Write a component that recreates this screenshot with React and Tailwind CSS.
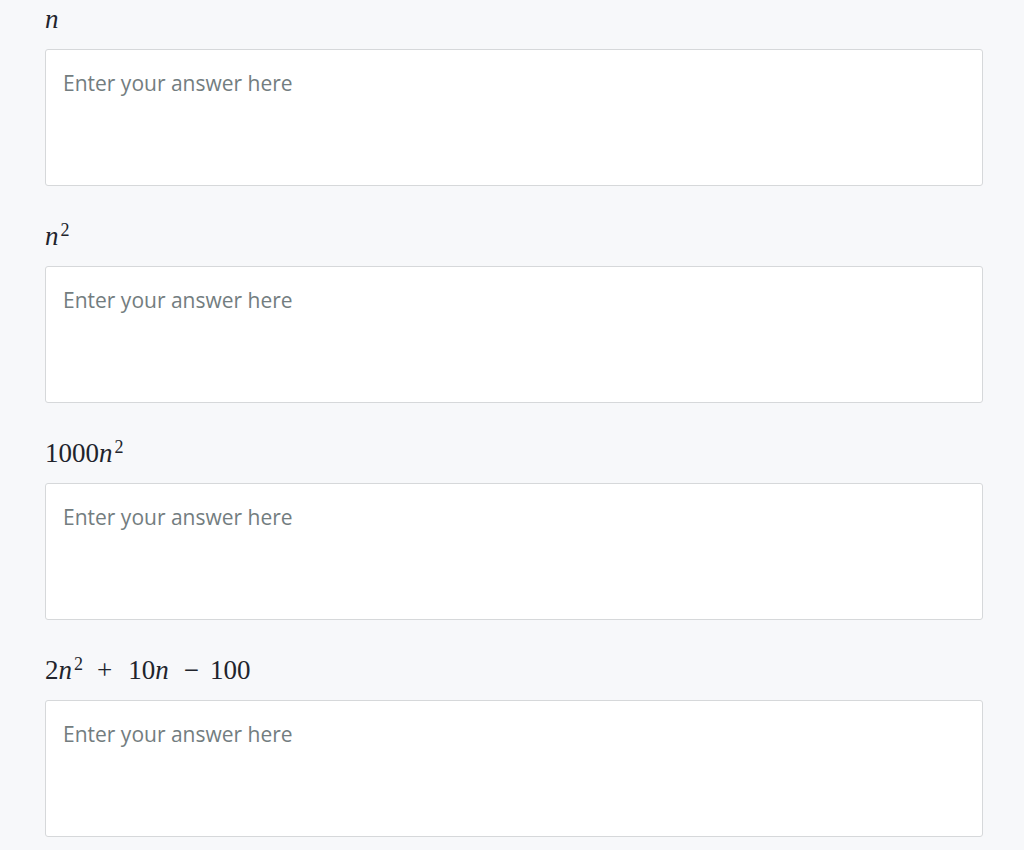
import React from "react";

const mathFont = { fontFamily: '"Liberation Serif", "DejaVu Serif", serif' };

function Label({ children }) {
  return (
    <div className="pt-[4px] mb-[19px] h-[30px] text-[27px] leading-[30px] text-[#21242c] whitespace-nowrap" style={mathFont}>
      {children}
    </div>
  );
}

const N = () => <i>n</i>;
const Sq = () => <sup className="text-[18px] ml-[2px]">2</sup>;

function Answer({ label }) {
  return (
    <div className="mb-[31px]">
      <Label>{label}</Label>
      <textarea
        placeholder="Enter your answer here"
        className="block w-full h-[137px] resize-none bg-white border border-[#d6d8da] rounded-[3px] px-[17px] py-[20px] text-[21px] leading-[26px] text-[#21242c] placeholder:text-[#737d80] outline-none"
        style={{ fontFamily: '"Open Sans", Lato, sans-serif' }}
      />
    </div>
  );
}

export default function App() {
  return (
    <div className="min-h-[850px] bg-[#f7f8fa] pl-[45px] pr-[41px]">
      <Answer label={<N />} />
      <Answer label={<><N /><Sq /></>} />
      <Answer label={<>1000<N /><Sq /></>} />
      <Answer
        label={
          <>
            2<N /><Sq />
            <span className="ml-[14px] mr-[16px]">+</span>
            10<N />
            <span className="ml-[15px] mr-[11px]">−</span>
            100
          </>
        }
      />
    </div>
  );
}
